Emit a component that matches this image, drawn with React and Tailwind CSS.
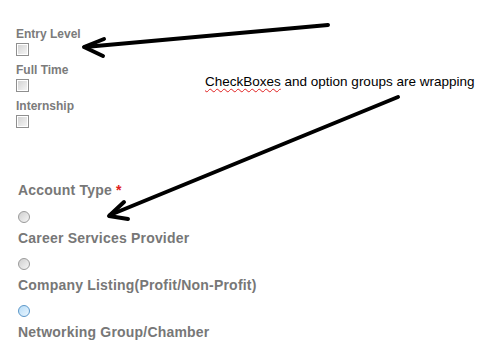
import React from "react";

const CHECKS = ["Entry Level", "Full Time", "Internship"];
const TYPES = [
  { label: "Career Services Provider" },
  { label: "Company Listing(Profit/Non-Profit)" },
  { label: "Networking Group/Chamber", hover: true },
];

function Checkbox() {
  return (
    <div className="mt-[2px] w-[13px] h-[13px] border border-[#8f8f8f] bg-white p-[1px]">
      <div className="w-full h-full bg-gradient-to-br from-[#d4d4d4] to-[#f4f4f4]" />
    </div>
  );
}

function Radio({ hover }) {
  return hover ? (
    <div className="w-[12px] h-[12px] rounded-full border border-[#5b97c9] bg-gradient-to-br from-[#b7dcf7] to-[#eaf6ff]" />
  ) : (
    <div className="w-[12px] h-[12px] rounded-full border border-[#9a9a9a] bg-gradient-to-br from-[#cfcfcf] to-[#f6f6f6]" />
  );
}

export default function App() {
  return (
    <div className="relative w-[482px] h-[359px] bg-white overflow-hidden font-['Liberation_Sans',Arial,sans-serif]">
      <div className="pl-[16px] pt-[27px] flex flex-col">
        {CHECKS.map((c) => (
          <div key={c} className="flex flex-col mb-[7px]">
            <span className="text-[12px] leading-[14px] font-bold text-[#7b7b7b]">{c}</span>
            <Checkbox />
          </div>
        ))}
      </div>

      <div className="pl-[18px] mt-[47px] flex flex-col">
        <span className="text-[14px] leading-[16px] font-bold text-[#777] tracking-[0.2px]">
          Account Type <span className="text-[#e02020]">*</span>
        </span>
        <div className="mt-[13px] flex flex-col">
          {TYPES.map((t) => (
            <div key={t.label} className="flex flex-col mb-[12px]">
              <Radio hover={t.hover} />
              <span className="mt-[7px] text-[14px] leading-[16px] font-bold text-[#777] tracking-[0.2px]">
                {t.label}
              </span>
            </div>
          ))}
        </div>
      </div>

      {/* annotation */}
      <span className="absolute left-[205px] top-[73px] text-[13.5px] leading-[18px] text-black whitespace-nowrap">
        <span className="underline decoration-wavy decoration-[#e02020] decoration-1 underline-offset-2">CheckBoxes</span>{" "}
        and option groups are wrapping
      </span>

      <svg className="absolute inset-0 pointer-events-none" width="482" height="359" viewBox="0 0 482 359">
        <g stroke="#000" strokeWidth="4" strokeLinecap="round" strokeLinejoin="round" fill="none">
          <path d="M328 25 L85 47" />
          <path d="M104 39 L84 47 L103 56" />
          <path d="M398 97 L110 215" />
          <path d="M124 202 L109 216 L128 219" />
        </g>
      </svg>
    </div>
  );
}
